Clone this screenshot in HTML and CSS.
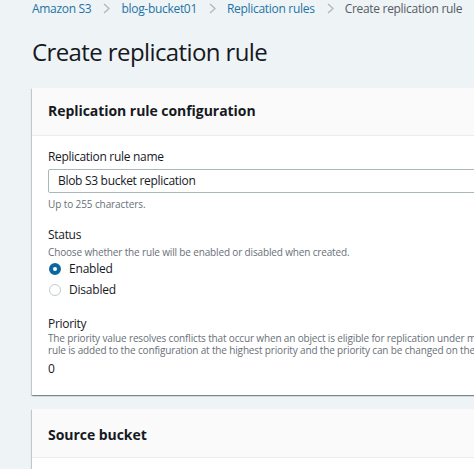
FILE: index.html
```html
<!DOCTYPE html>
<html lang="en">
<head>
<meta charset="utf-8">
<title>Create replication rule</title>
<link rel="stylesheet" href="styles.css">
</head>
<body>
<div class="page">
  <nav class="crumbs">
    <a class="crumb" href="#">Amazon S3</a>
    <svg class="sep" width="7" height="11" viewBox="0 0 7 11"><polyline points="1,1 6,5.5 1,10" fill="none" stroke="#aab7b8" stroke-width="1.2"/></svg>
    <a class="crumb" href="#">blog-bucket01</a>
    <svg class="sep" width="7" height="11" viewBox="0 0 7 11"><polyline points="1,1 6,5.5 1,10" fill="none" stroke="#aab7b8" stroke-width="1.2"/></svg>
    <a class="crumb" href="#">Replication rules</a>
    <svg class="sep" width="7" height="11" viewBox="0 0 7 11"><polyline points="1,1 6,5.5 1,10" fill="none" stroke="#aab7b8" stroke-width="1.2"/></svg>
    <span class="crumb current">Create replication rule</span>
  </nav>

  <h1 class="title">Create replication rule</h1>

  <section class="card">
    <header class="card-head"><h2>Replication rule configuration</h2></header>
    <div class="card-body">
      <label class="label">Replication rule name</label>
      <div class="input">Blob S3 bucket replication</div>
      <p class="hint">Up to 255 characters.</p>

      <div class="label status">Status</div>
      <p class="desc choose">Choose whether the rule will be enabled or disabled when created.</p>
      <div class="radios">
        <div class="radio-row"><span class="radio on"></span><span>Enabled</span></div>
        <div class="radio-row"><span class="radio"></span><span>Disabled</span></div>
      </div>

      <div class="label priority">Priority</div>
      <p class="desc lines"><span>The priority value resolves conflicts that occur when an object is eligible for replication under multiple rules to the same destination. The</span><span>rule is added to the configuration at the highest priority and the priority can be changed on the Edit page.</span></p>
      <div class="value">0</div>
    </div>
  </section>

  <section class="card second">
    <header class="card-head"><h2>Source bucket</h2></header>
    <div class="card-body"></div>
  </section>
</div>
</body>
</html>
```

FILE: styles.css
```css
html, body {
  margin: 0;
  padding: 0;
  background: #eef3f5;
  overflow: hidden;
}
body {
  font-family: "Open Sans", "Noto Sans", sans-serif;
  color: #16191f;
}
.page {
  width: 760px;
  padding-left: 32px;
}
.crumbs {
  display: flex;
  align-items: center;
  height: 17px;
  font-size: 12px;
  line-height: 17px;
  letter-spacing: -0.3px;
  white-space: nowrap;
}
.crumb {
  color: #1d74a6;
  text-decoration: none;
}
.crumb.current {
  color: #545b64;
}
.sep {
  margin: 0 11px 0 12px;
  flex: none;
}
.title {
  margin: 19px 0 0;
  font-size: 24px;
  line-height: 32px;
  letter-spacing: -0.6px;
  font-weight: 400;
  color: #16191f;
}
.card {
  margin-top: 20px;
  width: 720px;
  background: #fff;
  box-shadow: 0 1px 1px 0 rgba(0,28,36,.3), 1px 1px 1px 0 rgba(0,28,36,.15), -1px 1px 1px 0 rgba(0,28,36,.15);
}
.card.second {
  margin-top: 14px;
}
.card-head {
  background: #fafafa;
  border-bottom: 1px solid #eaeded;
  padding: 13px 16px 14px;
}
.second .card-head {
  padding: 16px 16px 12px;
}
.card-head h2 {
  margin: 0;
  font-size: 14px;
  line-height: 20px;
  font-weight: 700;
  letter-spacing: -0.05px;
}
.card-body {
  padding: 12px 16px 17px;
}
.label {
  display: block;
  font-size: 12px;
  line-height: 18px;
  letter-spacing: -0.3px;
}
.input {
  margin-top: 3px;
  height: 22px;
  border: 1px solid #aab7b8;
  border-radius: 2px;
  padding: 0 9px;
  font-size: 12px;
  letter-spacing: -0.3px;
  line-height: 22px;
  white-space: nowrap;
}
.hint, .desc {
  margin: 0;
  font-size: 10px;
  line-height: 14px;
  letter-spacing: -0.15px;
  color: #687078;
  white-space: nowrap;
}
.hint {
  margin-top: 4px;
  letter-spacing: -0.1px;
}
.status {
  margin-top: 15px;
}
.desc.choose {
  margin-top: 1px;
}
.radios {
  margin-top: -1px;
}
.radio-row {
  display: flex;
  align-items: center;
  height: 21px;
  font-size: 12px;
  letter-spacing: -0.2px;
  line-height: 21px;
}
.radio {
  box-sizing: border-box;
  width: 12px;
  height: 12px;
  border-radius: 50%;
  border: 1px solid #c3cbcc;
  background: #fff;
  margin: 0 8px 0 1px;
  flex: none;
}
.radio.on {
  border: 4px solid #0c679f;
}
.priority {
  margin-top: 16px;
  line-height: 15px;
}
.desc.lines {
  margin-top: 1px;
  line-height: 12px;
}
.desc.lines span {
  display: block;
}
.value {
  margin-top: 4px;
  font-size: 12px;
  line-height: 18px;
}
.second .card-body {
  height: 30px;
  padding: 0;
}
```
